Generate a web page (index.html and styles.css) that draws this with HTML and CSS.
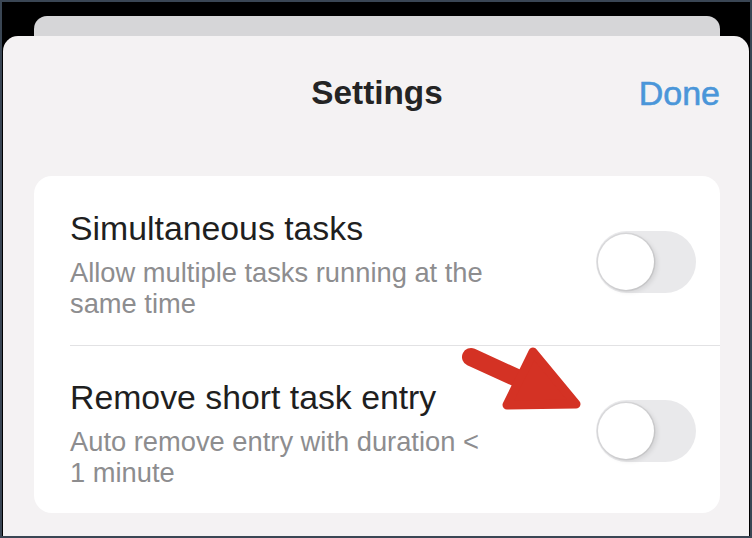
FILE: index.html
```html
<!DOCTYPE html>
<html lang="en">
<head>
    <meta charset="UTF-8">
    <meta name="viewport" content="width=device-width, initial-scale=1.0">
    <title>Settings</title>
    <link rel="stylesheet" href="styles.css">
</head>
<body>
    <div class="frame">
        <!-- sheet behind the settings sheet -->
        <div class="back-sheet"></div>

        <div class="sheet">
            <div class="sheet-header">
                <span></span>
                <h1 class="sheet-title">Settings</h1>
                <button class="done-btn">Done</button>
            </div>

            <div class="card">
                <div class="row">
                    <div class="row-text">
                        <div class="row-title">Simultaneous tasks</div>
                        <div class="row-sub">Allow multiple tasks running at the same time</div>
                    </div>
                    <div class="toggle"><div class="knob"></div></div>
                </div>
                <div class="divider"></div>
                <div class="row">
                    <div class="row-text">
                        <div class="row-title">Remove short task entry</div>
                        <div class="row-sub">Auto remove entry with duration &lt; 1 minute</div>
                    </div>
                    <div class="toggle"><div class="knob"></div></div>
                </div>
            </div>
        </div>

        <!-- annotation arrow -->
        <svg class="arrow" width="752" height="538" viewBox="0 0 752 538">
            <line x1="471" y1="357" x2="552" y2="394" stroke="#d43224" stroke-width="18" stroke-linecap="round"/>
            <polygon points="533,352 576,404 507,405" fill="#d43224" stroke="#d43224" stroke-width="9" stroke-linejoin="round"/>
        </svg>
    </div>
</body>
</html>
```

FILE: styles.css
```css
html, body {
    margin: 0;
    padding: 0;
}

body {
    font-family: "Liberation Sans", Arial, sans-serif;
    background-color: #000;
}

.frame {
    position: relative;
    box-sizing: border-box;
    width: 752px;
    height: 538px;
    border: 2px solid #3a4654;
    background-color: #000;
    padding-top: 14px;
    display: flex;
    flex-direction: column;
    overflow: hidden;
}

.back-sheet {
    height: 20px;
    margin: 0 30px 0 32px;
    background-color: #d6d6d8;
    border-radius: 13px 13px 0 0;
}

.sheet {
    flex: 1;
    margin: 0 1px;
    background-color: #f4f2f3;
    border-radius: 15px 15px 0 0;
    padding: 0 29px 0 31px;
    display: flex;
    flex-direction: column;
}

.sheet-header {
    display: grid;
    grid-template-columns: 1fr auto 1fr;
    align-items: center;
    padding-top: 37px;
    margin-bottom: 63px;
}

.sheet-title {
    margin: 0;
    font-size: 33.3px;
    line-height: 40px;
    font-weight: 700;
    color: #242424;
}

.done-btn {
    justify-self: end;
    padding: 0;
    border: none;
    background: none;
    font-family: inherit;
    font-size: 34px;
    line-height: 40px;
    color: #4a96d9;
    -webkit-text-stroke: 0.6px #4a96d9;
}

.card {
    background-color: #fff;
    border-radius: 18px;
}

.row {
    display: flex;
    align-items: center;
    justify-content: space-between;
    padding: 32px 24px 26px 36px;
}

.row + .divider + .row {
    padding-top: 31px;
    padding-bottom: 25px;
}

.row-text {
    max-width: 420px;
}

.row-title {
    font-size: 33.8px;
    line-height: 40px;
    color: #1f1f1f;
}

.row-sub {
    margin-top: 9px;
    font-size: 27.3px;
    line-height: 31px;
    color: #8d8d8f;
}

.divider {
    height: 1px;
    margin-left: 36px;
    background-color: #e2e2e4;
}

.toggle {
    box-sizing: border-box;
    width: 100px;
    height: 62px;
    border-radius: 31px;
    background-color: #e9e9eb;
    padding: 3px 3px 3px 2px;
    display: flex;
    align-items: center;
    margin-top: -3px;
}

.knob {
    width: 56px;
    height: 56px;
    border-radius: 50%;
    background-color: #fff;
    box-shadow: 0 0 0 1.5px rgba(0, 0, 0, 0.07), 3px 2px 5px rgba(0, 0, 0, 0.1);
}

.arrow {
    position: absolute;
    left: -2px;
    top: -2px;
    pointer-events: none;
}
```
